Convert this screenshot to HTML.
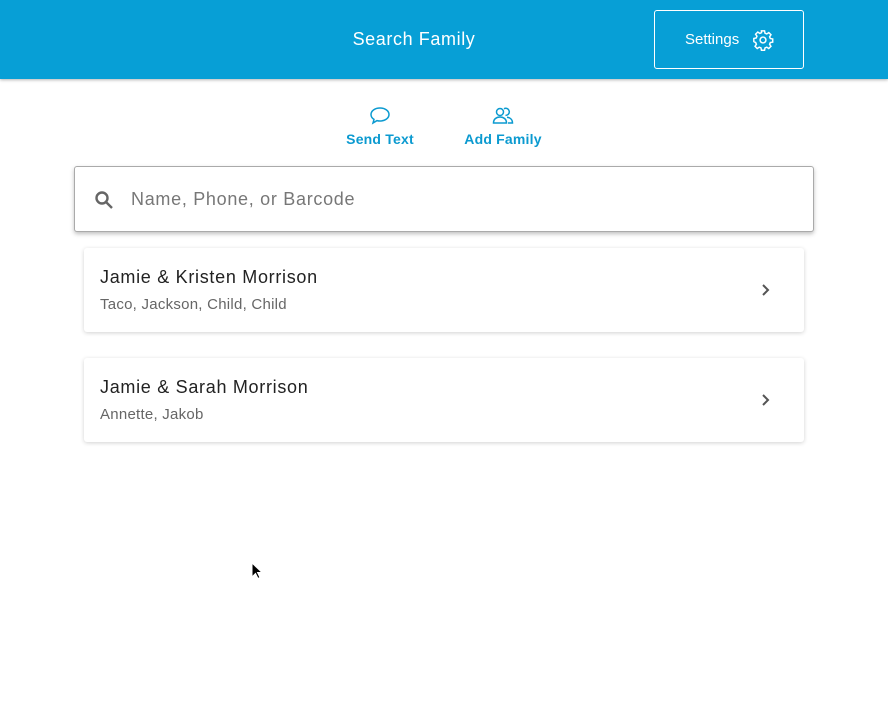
<!DOCTYPE html>
<html><head><style>
*{box-sizing:border-box;margin:0;padding:0}
body{width:888px;height:720px;background:#fff;font-family:"Liberation Sans",sans-serif;position:relative;overflow:hidden}
.hdr{position:absolute;left:0;top:0;width:888px;height:79px;background:#079fd6;box-shadow:0 1px 3px rgba(0,0,0,.3)}
.title{position:absolute;left:0;width:828px;top:29px;text-align:center;color:#fff;font-size:18px;letter-spacing:.6px}
.set{position:absolute;left:654px;top:10px;width:150px;height:59px;border:1px solid #fff;border-radius:3px;color:#fff;font-size:15px}
.set span{position:absolute;left:30px;top:20px}
.set svg{position:absolute;left:97px;top:18px}
.act{position:absolute;color:#0b9ad0;font-weight:bold;font-size:14px;text-align:center;letter-spacing:.2px}
.search{position:absolute;left:74px;top:166px;width:740px;height:66px;border:1px solid #aaa;border-radius:3px;box-shadow:0 2px 4px rgba(0,0,0,.25);background:#fff}
.search span{position:absolute;left:56px;top:22px;font-size:18px;color:#777;letter-spacing:.7px}
.search svg{position:absolute;left:19px;top:23px}
.card{position:absolute;left:84px;width:720px;height:84px;background:#fff;box-shadow:0 1px 4px rgba(0,0,0,.18);border-radius:3px}
.card .n{position:absolute;left:16px;top:19px;font-size:18px;color:#222;letter-spacing:.7px}
.card .s{position:absolute;left:16px;top:48px;font-size:15px;color:#666;letter-spacing:.25px}
.card svg{position:absolute;left:676px;top:35px}
</style></head><body>
<div class="hdr"><div class="title">Search Family</div>
<div class="set"><span>Settings</span><svg width="22" height="22" viewBox="0 0 24 24" fill="none" stroke="#fff" stroke-width="1.6"><circle cx="12" cy="12" r="3.2"/><path d="M10.3 2h3.4l.5 2.6 1.9.8 2.2-1.5 2.4 2.4-1.5 2.2.8 1.9 2.6.5v3.4l-2.6.5-.8 1.9 1.5 2.2-2.4 2.4-2.2-1.5-1.9.8-.5 2.6h-3.4l-.5-2.6-1.900-.8-2.2 1.5-2.4-2.4 1.5-2.2-.8-1.9L2 13.7v-3.4l2.6-.5.8-1.9-1.5-2.2 2.4-2.4 2.2 1.5 1.9-.8z"/></svg></div></div>
<div class="act" style="left:340px;top:106px;width:80px"><svg width="22" height="20" viewBox="0 0 22 20" fill="none" stroke="#0b9ad0" stroke-width="1.5"><path d="M11 2c5 0 9 2.8 9 6.5S16 15 11 15c-1 0-2-.1-3-.4L4 17l1-3.6C3 12.2 2 10.5 2 8.5 2 4.8 6 2 11 2z"/></svg><div style="margin-top:2px">Send Text</div></div>
<div class="act" style="left:458px;top:106px;width:90px"><svg width="22" height="20" viewBox="0 0 22 20" fill="none" stroke="#0b9ad0" stroke-width="1.5"><circle cx="8" cy="6" r="3.5"/><path d="M1.5 17c0-4 3-6 6.5-6s6.5 2 6.5 6z"/><path d="M12 2.8a3.5 3.5 0 1 1 1.5 6.5M15 11.2c3 .4 5.5 2.2 5.5 5.8H16"/></svg><div style="margin-top:2px">Add Family</div></div>
<div class="search"><svg width="20" height="20" viewBox="0 0 20 20" fill="none" stroke="#666" stroke-width="2.4"><circle cx="8" cy="8" r="5.5"/><path d="M12 12l6 6"/></svg><span>Name, Phone, or Barcode</span></div>
<div class="card" style="top:248px"><div class="n">Jamie &amp; Kristen Morrison</div><div class="s">Taco, Jackson, Child, Child</div><svg width="10" height="14" viewBox="0 0 10 14" fill="none" stroke="#555" stroke-width="2"><path d="M3 2l5 5-5 5"/></svg></div>
<div class="card" style="top:358px"><div class="n">Jamie &amp; Sarah Morrison</div><div class="s">Annette, Jakob</div><svg width="10" height="14" viewBox="0 0 10 14" fill="none" stroke="#555" stroke-width="2"><path d="M3 2l5 5-5 5"/></svg></div>
<svg style="position:absolute;left:251px;top:562px" width="12" height="18" viewBox="0 0 12 18"><path d="M1 1v14l3.5-3.5 2.5 5 2-1-2.5-5H11z" fill="#000" stroke="#fff" stroke-width="1"/></svg>
</body></html>
